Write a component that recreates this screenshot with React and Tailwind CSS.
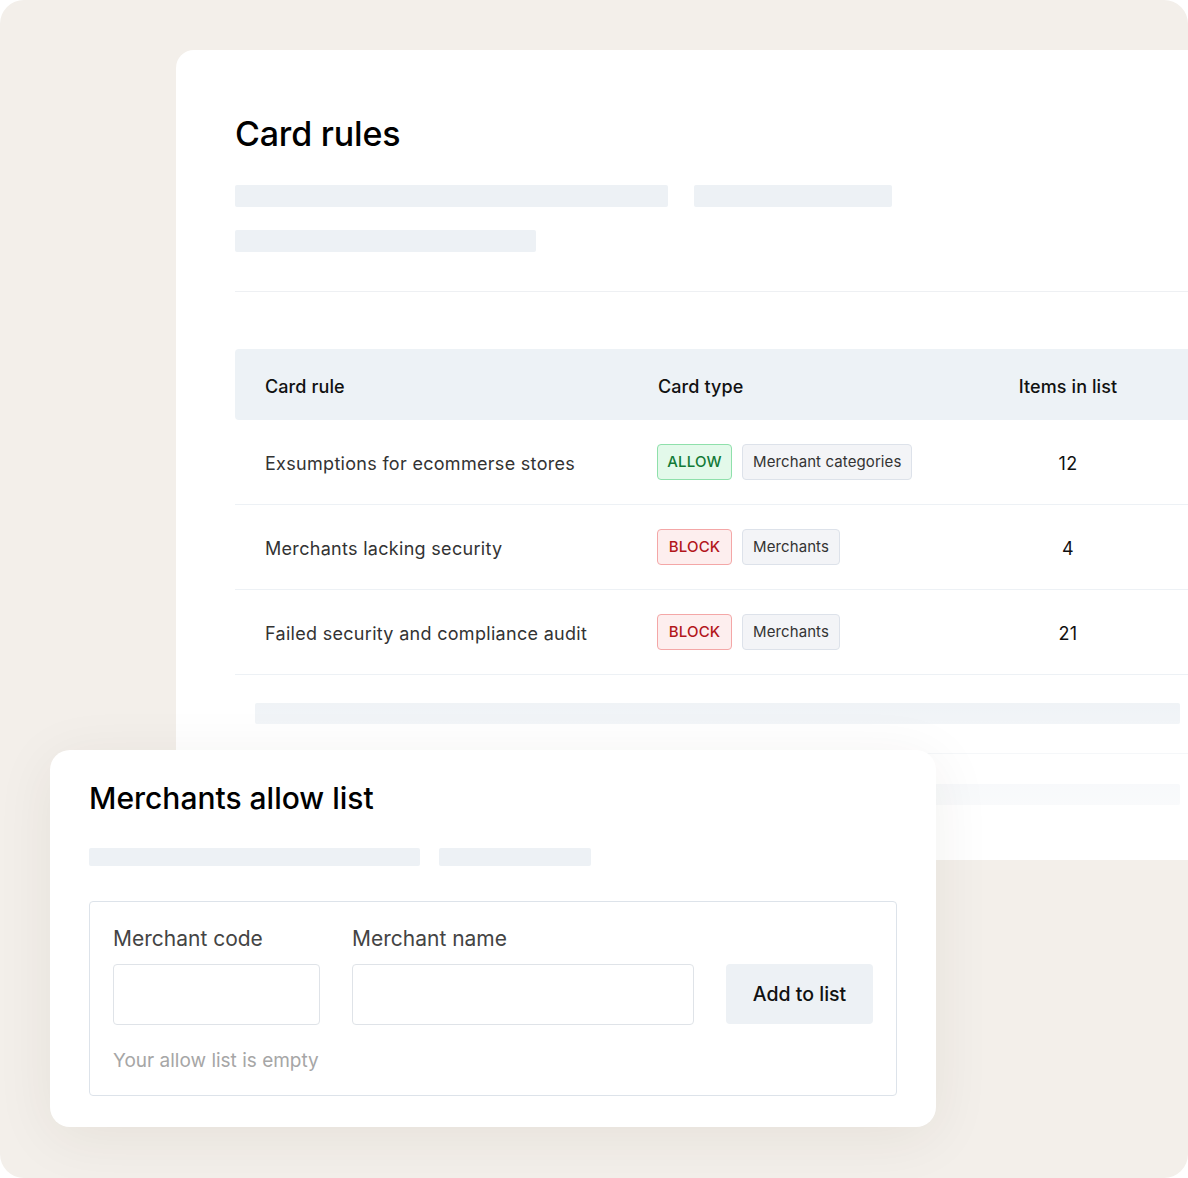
const FONT = { fontFamily: "Inter, 'Noto Sans', sans-serif" };

const rules = [
  { name: "Exsumptions for ecommerse stores", action: "ALLOW", type: "Merchant categories", items: 12 },
  { name: "Merchants lacking security", action: "BLOCK", type: "Merchants", items: 4 },
  { name: "Failed security and compliance audit", action: "BLOCK", type: "Merchants", items: 21 },
];

function ActionBadge({ action }) {
  const isAllow = action === "ALLOW";
  return (
    <span
      className={
        isAllow
          ? "inline-flex h-[36px] w-[75px] items-center justify-center rounded-[4px] border border-[#8fe0ab] bg-[#e3f9ea] text-[15px] font-medium tracking-[0.2px] text-[#127a37]"
          : "inline-flex h-[36px] w-[75px] items-center justify-center rounded-[4px] border border-[#f4a7a7] bg-[#fdeeee] text-[15px] font-medium tracking-[0.2px] text-[#b3161b]"
      }
    >
      {action}
    </span>
  );
}

function TypeBadge({ children }) {
  return (
    <span className="inline-flex h-[36px] items-center rounded-[4px] border border-[#dde2ea] bg-[#f3f4f7] px-[10px] text-[15px] tracking-[0.1px] text-[#333]">
      {children}
    </span>
  );
}

function CardRules() {
  return (
    <div className="relative h-[810px] w-[1100px] shrink-0 rounded-tl-[18px] bg-white pl-[59px] pt-[64px]">
      <h1 className="text-[34px] leading-[40px] font-medium tracking-[-0.2px] text-black">Card rules</h1>

      <div className="mt-[31px] flex gap-[26px]">
        <div className="h-[22px] w-[433px] rounded-[2px] bg-[#edf1f5]" />
        <div className="h-[22px] w-[198px] rounded-[2px] bg-[#edf1f5]" />
      </div>
      <div className="mt-[23px] h-[22px] w-[301px] rounded-[2px] bg-[#edf1f5]" />

      <div className="mt-[39px] h-px bg-[#eef0f3]" />

      <div className="mt-[57px]">
        <div className="flex h-[71px] items-center rounded-[4px] bg-[#edf2f6] pl-[30px] pt-[3px] text-[18px] font-medium tracking-[0.1px] text-[#111]">
          <div className="w-[393px]">Card rule</div>
          <div className="w-[310px]">Card type</div>
          <div className="w-[200px] text-center">Items in list</div>
        </div>

        {rules.map((rule) => (
          <div
            key={rule.name}
            className="flex h-[85px] items-center border-b border-[#edf1f5] pl-[30px] text-[18px] tracking-[0.3px] text-[#333]"
          >
            <div className="w-[392px] pt-[2px]">{rule.name}</div>
            <div className="flex w-[311px] items-center gap-[10px] tracking-normal">
              <ActionBadge action={rule.action} />
              <TypeBadge>{rule.type}</TypeBadge>
            </div>
            <div className="w-[200px] pt-[2px] text-center text-[#111]">{rule.items}</div>
          </div>
        ))}

        <div className="ml-[20px] mt-[28px] h-[21px] w-[925px] rounded-[2px] bg-[#edf1f5]" />
        <div className="mt-[29px] h-px bg-[#edf1f5]" />
        <div className="ml-[20px] mt-[30px] h-[21px] w-[925px] rounded-[2px] bg-[#edf1f5]" />
      </div>

      <div className="pointer-events-none absolute inset-x-0 bottom-0 h-[180px] bg-gradient-to-b from-white/0 via-white/55 to-white/85" />
    </div>
  );
}

function AllowList() {
  return (
    <div className="absolute left-[50px] top-[750px] h-[377px] w-[886px] rounded-[20px] bg-white px-[39px] pt-[30px] shadow-[0_10px_60px_rgba(60,40,20,0.07)]">
      <h2 className="text-[30px] leading-[36px] font-medium text-black">Merchants allow list</h2>

      <div className="mt-[32px] flex gap-[19px]">
        <div className="h-[18px] w-[331px] rounded-[2px] bg-[#edf1f5]" />
        <div className="h-[18px] w-[152px] rounded-[2px] bg-[#edf1f5]" />
      </div>

      <div className="mt-[35px] h-[195px] w-[808px] rounded-[4px] border border-[#dde3ea] px-[23px] pt-[23px]">
        <div className="flex items-end gap-[32px]">
          <label className="flex flex-col gap-[11px]">
            <span className="text-[21px] leading-[28px] text-[#444]">Merchant code</span>
            <input className="h-[61px] w-[207px] rounded-[4px] border border-[#dfe3e8] bg-white outline-none" />
          </label>
          <label className="flex flex-col gap-[11px]">
            <span className="text-[21px] leading-[28px] text-[#444]">Merchant name</span>
            <input className="h-[61px] w-[342px] rounded-[4px] border border-[#dfe3e8] bg-white outline-none" />
          </label>
          <button
            type="button"
            className="mb-px h-[60px] w-[148px] rounded-[4px] bg-[#edf1f5] pt-[2px] text-[19.5px] font-medium text-[#111]"
          >
            Add to list
          </button>
        </div>
        <p className="mt-[22px] text-[19px] leading-[28px] text-[#a6a6a6]">Your allow list is empty</p>
      </div>
    </div>
  );
}

export default function App() {
  return (
    <div className="h-[1178px] w-[1188px] bg-white" style={FONT}>
      <div className="relative flex h-full w-full overflow-hidden rounded-[24px] bg-[#f3efea] pl-[176px] pt-[50px]">
        <CardRules />
        <AllowList />
      </div>
    </div>
  );
}
